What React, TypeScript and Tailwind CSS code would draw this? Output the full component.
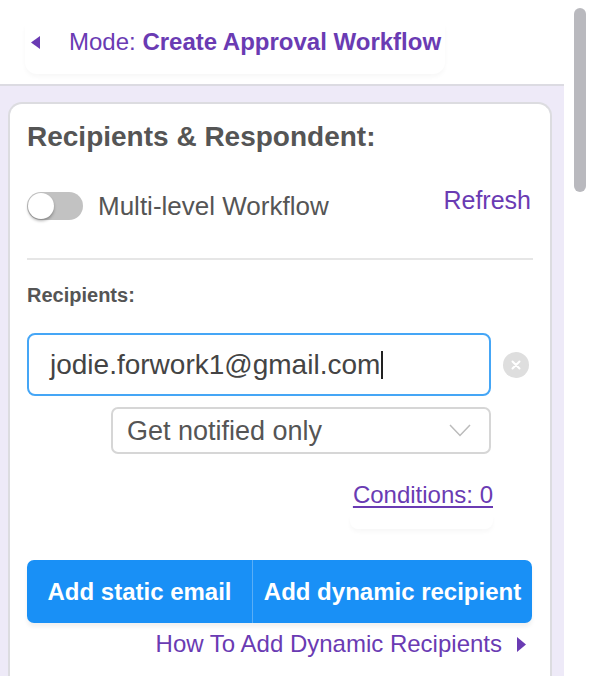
export default function App() {
  return (
    <div
      className="flex h-[676px] w-[594px] overflow-hidden bg-white"
      style={{ fontFamily: '"Liberation Sans", Arial, sans-serif' }}
    >
      <div className="flex w-[564px] flex-col">
        {/* header */}
        <div className="h-[84px] shrink-0 px-[25px] pt-[24px]">
          <div className="flex h-[50px] w-[420px] items-start rounded-b-xl shadow-[0_3px_4px_rgba(0,0,0,0.03)]">
            <div className="flex h-[36px] items-center gap-[28px] pl-[6px]">
              <svg width="10" height="13" viewBox="0 0 10 13">
                <path d="M9 0 L0 6.5 L9 13 Z" fill="#6a3bb3" />
              </svg>
              <span className="text-[24px] leading-[28px] text-[#6a3bb3]">
                Mode: <span className="font-bold">Create Approval Workflow</span>
              </span>
            </div>
          </div>
        </div>

        {/* body */}
        <div className="flex-1 border-t-2 border-[#dcdbe2] bg-[#eeeaf8] pl-[8px] pr-[12px] pt-[16px]">
          <div className="h-full rounded-t-[14px] border-2 border-b-0 border-[#dcdce0] bg-white px-[17px] pt-[17px]">
            <h2 className="text-[28px] font-bold leading-[32px] text-[#555]">Recipients &amp; Respondent:</h2>

            <div className="mt-[32px] flex items-start justify-between">
              <div className="mt-[6px] flex items-center gap-[15px]">
                <div className="relative h-[28px] w-[56px] rounded-full bg-[#c2c2c2]">
                  <div className="absolute left-[1px] top-[1px] h-[26px] w-[26px] rounded-full bg-white shadow-[0_2px_3px_rgba(0,0,0,0.3)]" />
                </div>
                <span className="text-[26px] leading-[30px] text-[#555]">Multi-level Workflow</span>
              </div>
              <span className="mr-[2px] text-[25px] leading-[30px] text-[#6a3bb3]">Refresh</span>
            </div>

            <div className="mt-[37px] h-[2px] w-full bg-[#e6e6e6]" />

            <div className="mt-[23px] text-[20px] font-bold leading-[24px] text-[#555]">Recipients:</div>

            <div className="mt-[26px] flex items-center">
              <div className="flex h-[63px] w-[464px] items-center rounded-[8px] border-2 border-[#45a6f6] pl-[21px]">
                <span className="text-[28px] leading-[32px] text-[#444]">jodie.forwork1@gmail.com</span>
                <span className="ml-[1px] inline-block h-[28px] w-[1.5px] bg-[#222]" />
              </div>
              <div className="ml-[12px] flex h-[26px] w-[26px] items-center justify-center rounded-full bg-[#dedede]">
                <svg width="10" height="10" viewBox="0 0 10 10">
                  <path d="M1.5 1.5 L8.5 8.5 M8.5 1.5 L1.5 8.5" stroke="white" strokeWidth="2" strokeLinecap="round" />
                </svg>
              </div>
            </div>

            <div className="ml-[84px] mt-[11px] flex h-[47px] w-[380px] items-center justify-between rounded-[7px] border-2 border-[#d6d6d6] pl-[14px] pr-[18px]">
              <span className="text-[27px] leading-[32px] text-[#555]">Get notified only</span>
              <svg width="22" height="13" viewBox="0 0 22 13">
                <path d="M1 1 L11 11.5 L21 1" fill="none" stroke="#bbb" strokeWidth="1.5" />
              </svg>
            </div>

            <div className="flex justify-end pr-[40px]">
              <div className="flex w-[143px] flex-col items-end">
                <span className="mt-[27px] whitespace-nowrap text-[24px] leading-[28px] text-[#6a3bb3] underline underline-offset-[3px]">
                  Conditions: 0
                </span>
                <div className="mt-[6px] h-[14px] w-full rounded-b-lg shadow-[0_3px_4px_rgba(0,0,0,0.03)]" />
              </div>
            </div>

            <div className="mt-[31px] flex h-[63px] w-[505px] overflow-hidden rounded-[7px] bg-[#1990f6] shadow-[0_4px_4px_rgba(0,0,0,0.06)]">
              <div className="flex w-[226px] items-center justify-center border-r border-[#5aaef6] text-[24px] font-bold text-white">
                Add static email
              </div>
              <div className="flex flex-1 items-center justify-center whitespace-nowrap text-[24px] font-bold text-white">
                Add dynamic recipient
              </div>
            </div>

            <div className="mt-[7px] flex w-[505px] items-center justify-end gap-[15px] pr-[6px]">
              <span className="whitespace-nowrap text-[24px] leading-[28px] text-[#6a3bb3]">How To Add Dynamic Recipients</span>
              <svg width="9" height="15" viewBox="0 0 9 15">
                <path d="M0 0 L9 7.5 L0 15 Z" fill="#6a3bb3" />
              </svg>
            </div>
          </div>
        </div>
      </div>

      {/* scrollbar */}
      <div className="w-[30px] pl-[10px] pt-[8px]">
        <div className="h-[184px] w-[12px] rounded-full bg-[#b9b9be]" />
      </div>
    </div>
  );
}
